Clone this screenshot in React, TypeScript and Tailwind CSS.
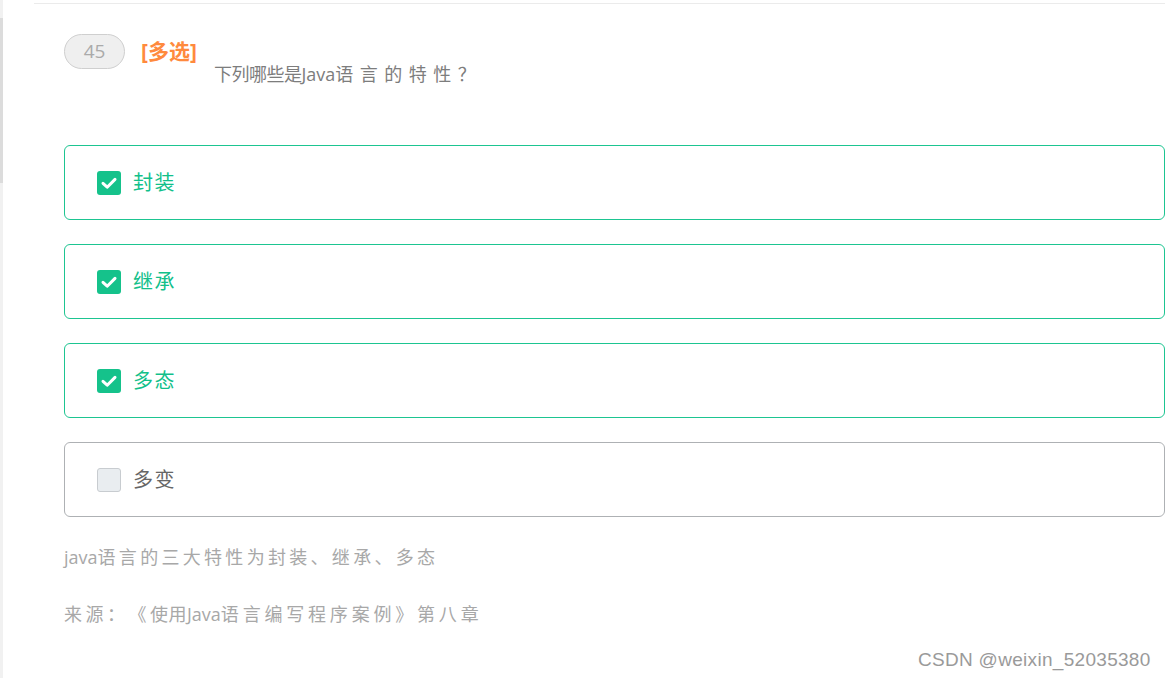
import React from "react";

function Check({ on }: { on: boolean }) {
  return on ? (
    <span className="flex h-[24px] w-[24px] items-center justify-center rounded-[3px] bg-[#15c28b]">
      <svg width="24" height="24" viewBox="0 0 24 24" fill="none">
        <path d="M6 12.3 L10.2 16.2 L18 8.4" stroke="#fff" strokeWidth="3" strokeLinecap="round" strokeLinejoin="round" />
      </svg>
    </span>
  ) : (
    <span className="h-[24px] w-[24px] rounded-[3px] border border-[#c8ccd0] bg-[#e9edf0]" />
  );
}

function Option({ label, on }: { label: string; on: boolean }) {
  return (
    <div
      className={`flex h-[75px] w-[1101px] items-center gap-[12px] rounded-[6px] border pl-[32px] ${
        on ? "border-[#1dc591]" : "border-[#aeb1b4]"
      }`}
    >
      <Check on={on} />
      <span className={`text-[20px] tracking-[1.5px] ${on ? "text-[#11c08a]" : "text-[#666]"}`}>{label}</span>
    </div>
  );
}

export default function App() {
  return (
    <div className="relative flex h-[678px] w-[1165px] overflow-hidden bg-white font-['Open_Sans','Noto_Sans_CJK_SC',sans-serif] [text-spacing-trim:space-all]">
      <div className="flex w-[3px] shrink-0 flex-col bg-[#f1f1f1]">
        <div className="mt-[18px] h-[165px] w-full bg-[#dcdcdc]" />
      </div>
      <div className="flex-1">
        <div className="ml-[31px] pt-[3px]">
          <div className="h-[1px] w-full bg-[#ebebeb]" />
        </div>
        <div className="pl-[61px]">
          <div className="mt-[30px] flex items-start">
            <div className="flex h-[35px] w-[61px] items-center justify-center rounded-full border border-[#cfcfcf] bg-[#efefef] text-[19px] text-[#aaa]">
              45
            </div>
            <div className="ml-[16px] mt-[3px] text-[21px] font-bold leading-[28px] text-[#ff8a3d]">[多选]</div>
            <div className="ml-[17px] mt-[28px] whitespace-nowrap text-[18px] leading-[24px] text-[#7d7d7d]">
              <span className="tracking-[-0.5px]">下列哪些是</span>
              <span>Java</span>
              <span className="tracking-[6.5px]">语言的特性？</span>
            </div>
          </div>
          <div className="mt-[59px] flex flex-col gap-[24px]">
            <Option label="封装" on />
            <Option label="继承" on />
            <Option label="多态" on />
            <Option label="多变" on={false} />
          </div>
          <div className="mt-[27px] whitespace-nowrap text-[18px] leading-[26px] text-[#a8a8a8]">
            <span>java</span>
            <span className="tracking-[3.3px]">语言的三大特性为封装、继承、多态</span>
          </div>
          <div className="mt-[31px] whitespace-nowrap text-[18px] leading-[26px] text-[#a8a8a8]">
            <span className="tracking-[3.5px]">来源：《</span>
            <span className="tracking-[0.5px]">使用</span>
            <span>Java</span>
            <span className="tracking-[3.8px]">语言编写程序案例》第八章</span>
          </div>
        </div>
      </div>
      <div className="absolute left-[918px] top-[649px] font-['Liberation_Sans',sans-serif] text-[19px] leading-[22px] tracking-[0.3px] text-[#9a9a9a]">
        CSDN @weixin_52035380
      </div>
    </div>
  );
}
